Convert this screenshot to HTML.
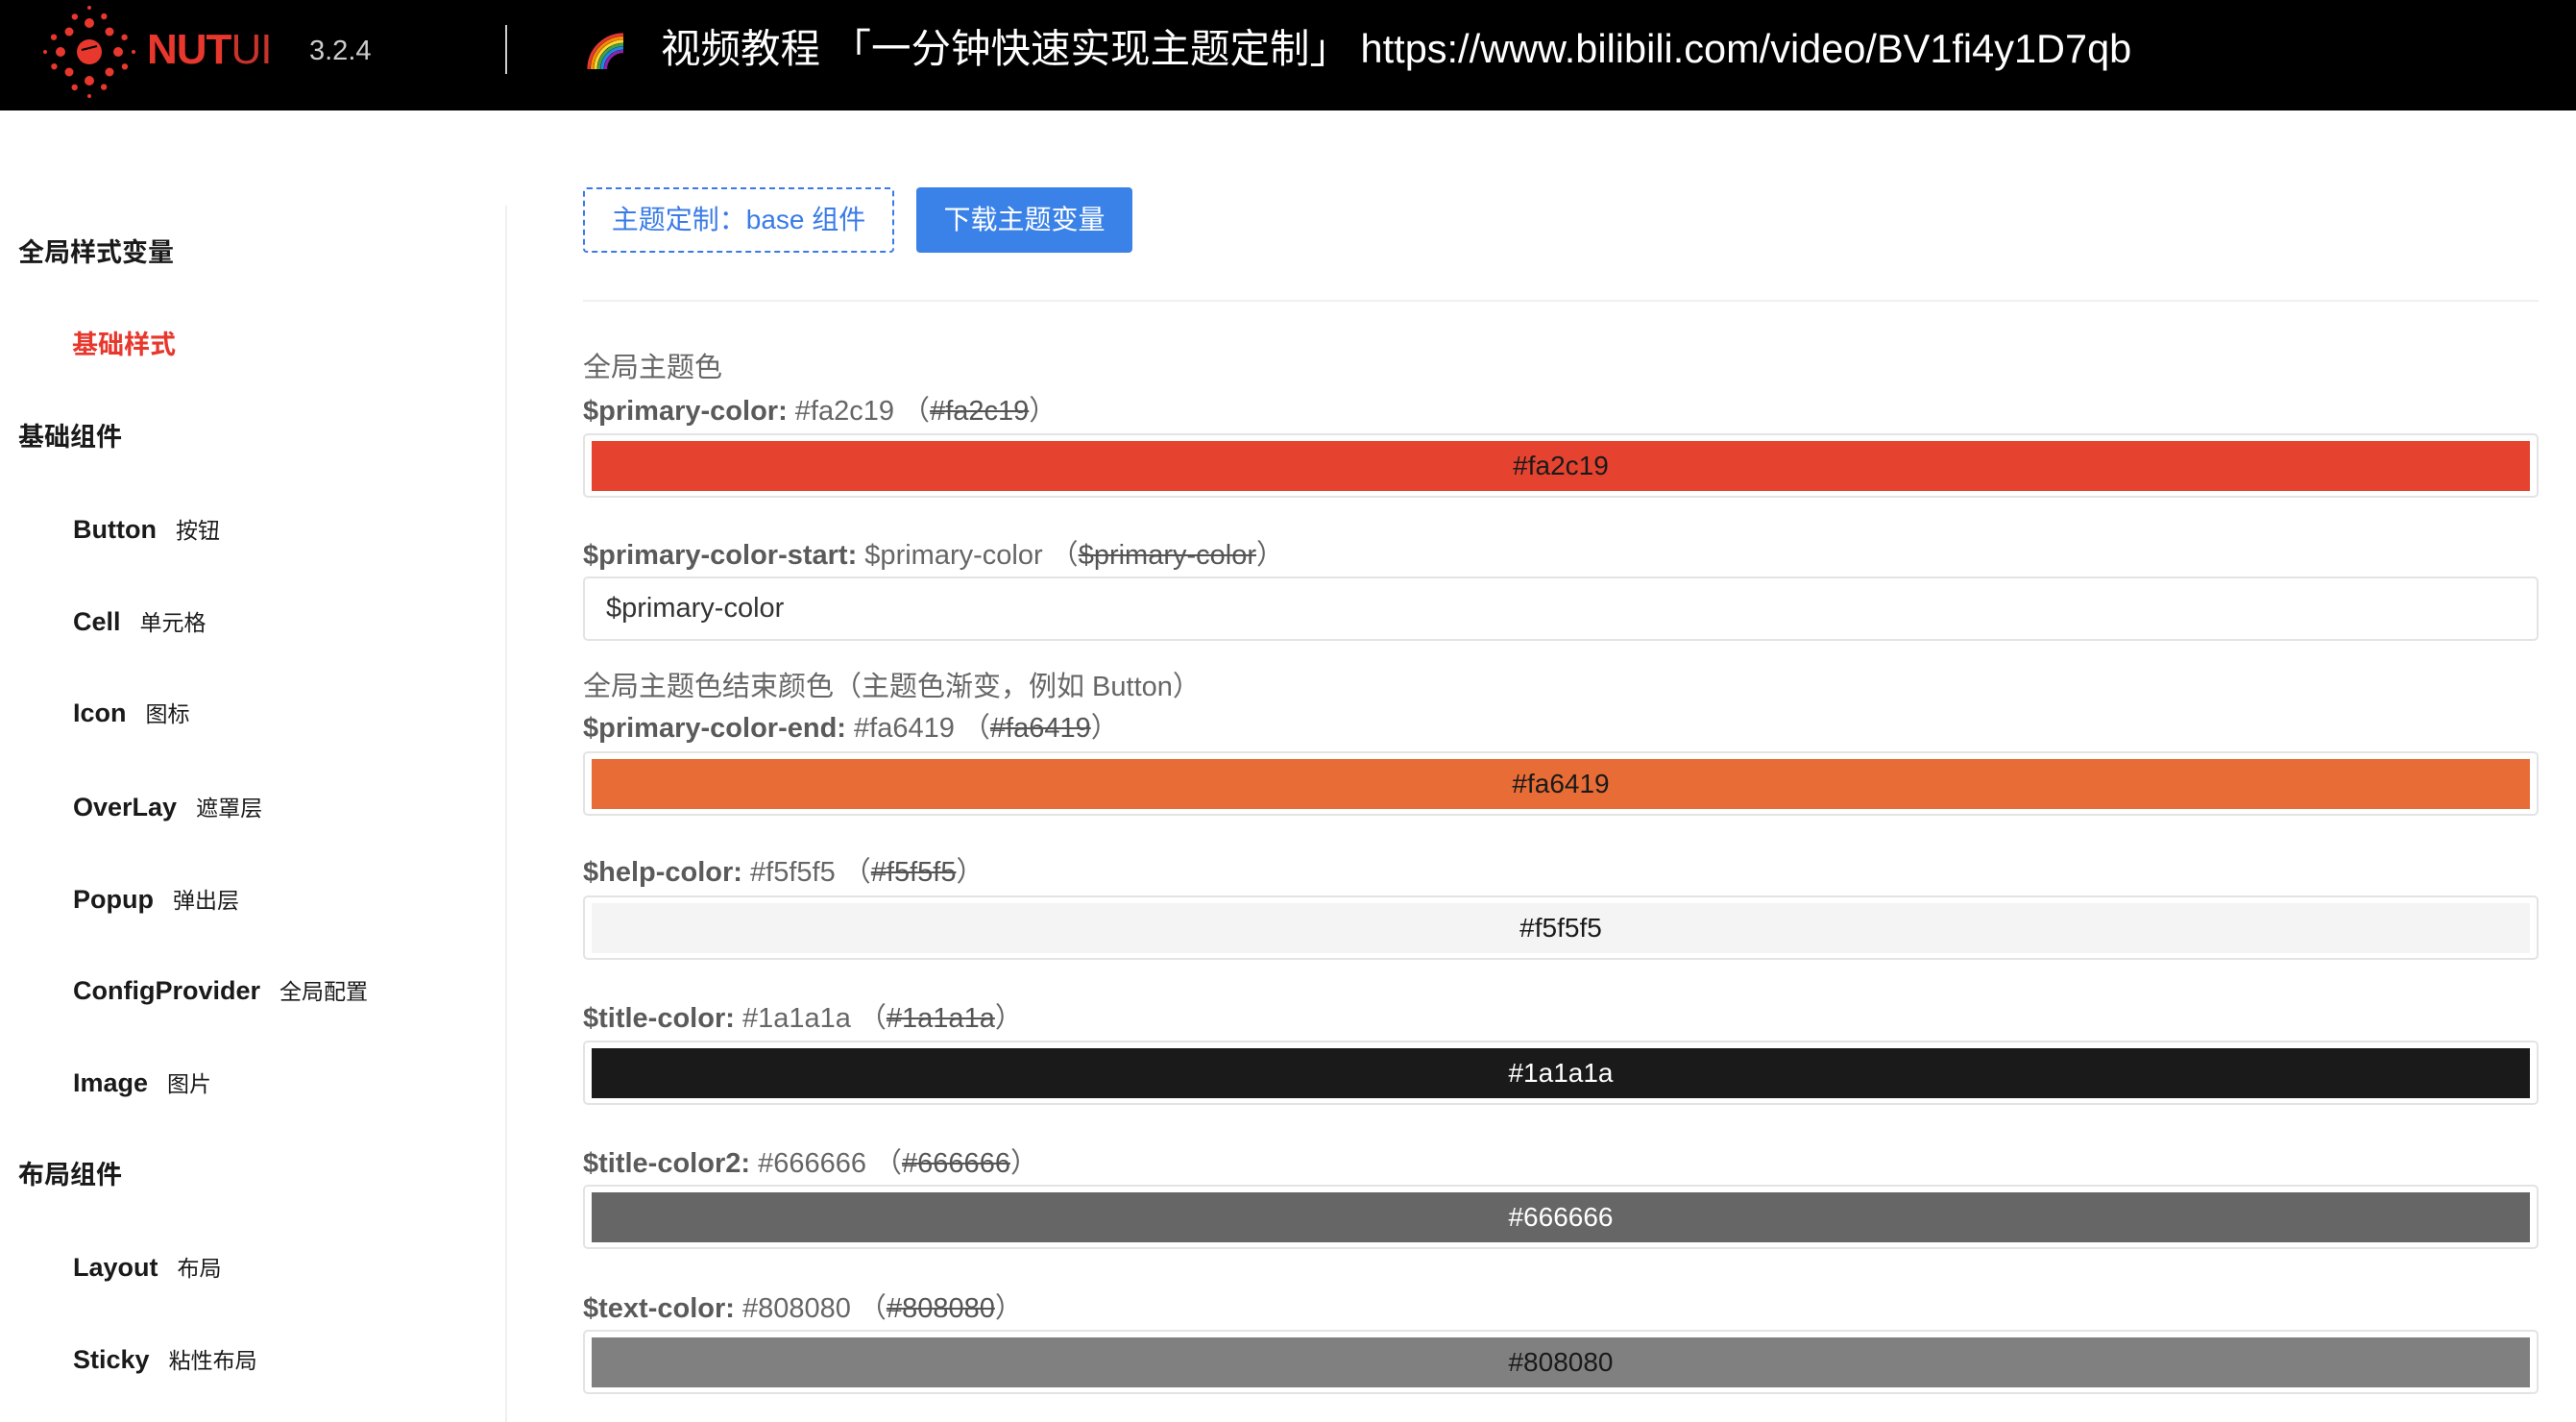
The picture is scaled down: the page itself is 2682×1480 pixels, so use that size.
<!DOCTYPE html>
<html><head><meta charset="utf-8">
<style>
*{margin:0;padding:0;box-sizing:border-box}
body{width:2682px;height:1480px;background:#fff;position:relative;overflow:hidden;font-family:"Liberation Sans","Noto Sans CJK SC",sans-serif}
.a{position:absolute;white-space:nowrap;line-height:40px}
.hdr{position:absolute;left:0;top:0;width:2682px;height:115px;background:#000}
.g{font-size:27px;font-weight:bold;color:#1a1a1a}
.it{font-size:27px;font-weight:bold;color:#1a1a1a}
.it span{font-size:23px;font-weight:normal;margin-left:20px}
.lab{font-size:29px;color:#666}
.lab b{color:#5a5a5a}
.lab s{color:#555}
.box{position:absolute;left:607px;width:2036px;height:67px;border:2px solid #e3e3e3;border-radius:5px;padding:6px 7px}
.bar{width:100%;height:52px;line-height:52px;text-align:center;font-size:28px;color:#1a1a1a}
</style></head><body>
<div class="hdr"></div>
<svg style="position:absolute;left:43px;top:4px" width="100" height="100" viewBox="-50 -50 100 100">
<g fill="#e8372c">
<circle r="13"/>
<g><circle cx="0" cy="-30" r="5"/><circle cx="0" cy="30" r="5"/><circle cx="-30" cy="0" r="5"/><circle cx="30" cy="0" r="5"/><circle cx="21" cy="21" r="4.5"/><circle cx="-21" cy="21" r="4.5"/><circle cx="21" cy="-21" r="4.5"/><circle cx="-21" cy="-21" r="4.5"/></g>
<g transform="rotate(22.5)"><circle cx="0" cy="-40" r="3.2"/><circle cx="0" cy="40" r="3.2"/><circle cx="-40" cy="0" r="3.2"/><circle cx="40" cy="0" r="3.2"/><circle cx="28" cy="28" r="3.2"/><circle cx="-28" cy="28" r="3.2"/><circle cx="28" cy="-28" r="3.2"/><circle cx="-28" cy="-28" r="3.2"/></g>
<circle cx="0" cy="-46" r="2"/><circle cx="0" cy="46" r="2"/><circle cx="-46" cy="0" r="2"/><circle cx="46" cy="0" r="2"/>
</g>
<path d="M-8 -2 L8 -6" stroke="#000" stroke-width="2"/>
</svg>
<div class="a" style="left:153px;top:30px;font-size:44px;font-weight:bold;color:#e8372c;line-height:44px;letter-spacing:-1px">NUT<span style="font-weight:normal;color:#c8332a">UI</span></div>
<div class="a" style="left:322px;top:33px;font-size:29px;color:#ccc">3.2.4</div>
<div style="position:absolute;left:526px;top:26px;width:2px;height:51px;background:#ccc"></div>
<svg style="position:absolute;left:609px;top:32px" width="44" height="40" viewBox="0 0 44 40">
<g fill="none" stroke-width="3.2">
<path d="M4 40 A36 36 0 0 1 40 4" stroke="#e53935"/>
<path d="M7.5 40 A32.5 32.5 0 0 1 40 7.5" stroke="#fb8c00"/>
<path d="M11 40 A29 29 0 0 1 40 11" stroke="#fdd835"/>
<path d="M14.5 40 A25.5 25.5 0 0 1 40 14.5" stroke="#43a047"/>
<path d="M18 40 A22 22 0 0 1 40 18" stroke="#1e88e5"/>
<path d="M21.5 40 A18.5 18.5 0 0 1 40 21.5" stroke="#8e24aa"/>
</g></svg>
<div class="a" style="left:688px;top:27px;font-size:41.5px;color:#fff;line-height:48px">视频教程 「一分钟快速实现主题定制」 https://www.bilibili.com/video/BV1fi4y1D7qb</div>

<div style="position:absolute;left:526px;top:214px;width:2px;height:1266px;background:#f0f0f0"></div>
<div class="a g" style="left:19px;top:243px">全局样式变量</div>
<div class="a g" style="left:75px;top:339px;color:#e8372c">基础样式</div>
<div class="a g" style="left:19px;top:435px">基础组件</div>
<div class="a it" style="left:76px;top:531px">Button<span>按钮</span></div>
<div class="a it" style="left:76px;top:627px">Cell<span>单元格</span></div>
<div class="a it" style="left:76px;top:722px">Icon<span>图标</span></div>
<div class="a it" style="left:76px;top:820px">OverLay<span>遮罩层</span></div>
<div class="a it" style="left:76px;top:916px">Popup<span>弹出层</span></div>
<div class="a it" style="left:76px;top:1011px">ConfigProvider<span>全局配置</span></div>
<div class="a it" style="left:76px;top:1107px">Image<span>图片</span></div>
<div class="a g" style="left:19px;top:1203px">布局组件</div>
<div class="a it" style="left:76px;top:1299px">Layout<span>布局</span></div>
<div class="a it" style="left:76px;top:1395px">Sticky<span>粘性布局</span></div>

<div style="position:absolute;left:607px;top:195px;width:324px;height:68px;border:2px dashed #3a7be8;border-radius:4px;color:#3a7be8;font-size:28px;line-height:64px;text-align:center">主题定制：base 组件</div>
<div style="position:absolute;left:954px;top:195px;width:225px;height:68px;background:#3a82e8;border-radius:4px;color:#fff;font-size:28px;line-height:68px;text-align:center">下载主题变量</div>
<div style="position:absolute;left:607px;top:312px;width:2036px;height:2px;background:#f0f0f0"></div>

<div class="a lab" style="left:607px;top:363px">全局主题色</div>
<div class="a lab" style="left:607px;top:408px"><b>$primary-color:</b> #fa2c19 （<s>#fa2c19</s>）</div>
<div class="box" style="top:451px"><div class="bar" style="background:#e5432f">#fa2c19</div></div>

<div class="a lab" style="left:607px;top:558px"><b>$primary-color-start:</b> $primary-color （<s>$primary-color</s>）</div>
<div class="box" style="top:600px;padding:0 22px;font-size:29px;line-height:63px;color:#333">$primary-color</div>

<div class="a lab" style="left:607px;top:695px">全局主题色结束颜色（主题色渐变，例如 Button）</div>
<div class="a lab" style="left:607px;top:738px"><b>$primary-color-end:</b> #fa6419 （<s>#fa6419</s>）</div>
<div class="box" style="top:782px"><div class="bar" style="background:#e86c35">#fa6419</div></div>

<div class="a lab" style="left:607px;top:888px"><b>$help-color:</b> #f5f5f5 （<s>#f5f5f5</s>）</div>
<div class="box" style="top:932px"><div class="bar" style="background:#f4f4f4">#f5f5f5</div></div>

<div class="a lab" style="left:607px;top:1040px"><b>$title-color:</b> #1a1a1a （<s>#1a1a1a</s>）</div>
<div class="box" style="top:1083px"><div class="bar" style="background:#1a1a1a;color:#fff">#1a1a1a</div></div>

<div class="a lab" style="left:607px;top:1191px"><b>$title-color2:</b> #666666 （<s>#666666</s>）</div>
<div class="box" style="top:1233px"><div class="bar" style="background:#666;color:#fff">#666666</div></div>

<div class="a lab" style="left:607px;top:1342px"><b>$text-color:</b> #808080 （<s>#808080</s>）</div>
<div class="box" style="top:1384px"><div class="bar" style="background:#808080;color:#1a1a1a">#808080</div></div>
</body></html>
